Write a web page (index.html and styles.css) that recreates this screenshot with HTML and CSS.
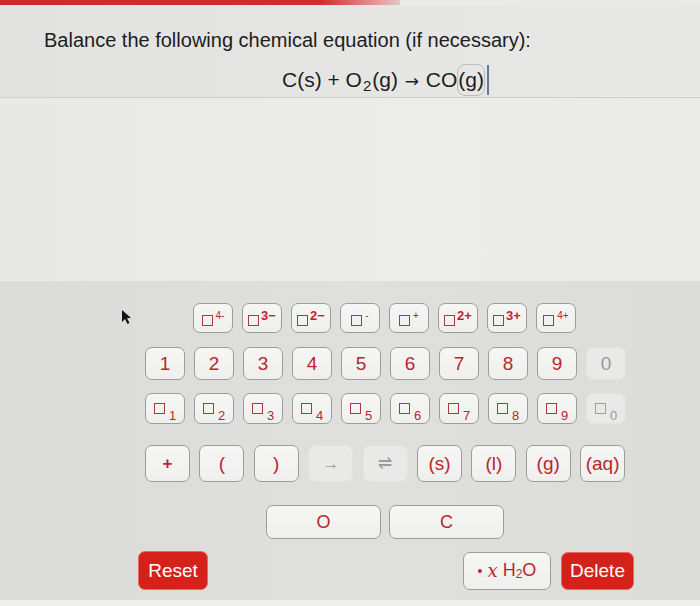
FILE: index.html
```html
<!DOCTYPE html>
<html>
<head>
<meta charset="utf-8">
<link rel="stylesheet" href="styles.css">
</head>
<body>
<div class="page">
  <div class="topbar"></div>
  <header class="question">
    <div class="title">Balance the following chemical equation (if necessary):</div>
    <div class="equation">C(s) + O<sub>2</sub>(g) <span class="arr">→</span> CO<span class="sel">(g)</span><span class="caret"></span></div>
  </header>
  <div class="blank"></div>
  <section class="keyboard">
    <svg class="pointer" width="12" height="16" viewBox="0 0 12 16"><path d="M1 1 L1 13 L4 10 L6.5 15 L8.5 14 L6 9 L10 9 Z" fill="#111"/></svg>
    <div class="row charges">
      <button class="key"><span class="box"></span><sup class="sm">4-</sup></button>
      <button class="key"><span class="box"></span><sup class="lg">3<span class="mn">−</span></sup></button>
      <button class="key"><span class="box"></span><sup class="lg">2<span class="mn">−</span></sup></button>
      <button class="key"><span class="box"></span><sup class="sm">-</sup></button>
      <button class="key"><span class="box"></span><sup class="sm">+</sup></button>
      <button class="key"><span class="box"></span><sup class="lg">2+</sup></button>
      <button class="key"><span class="box"></span><sup class="lg">3+</sup></button>
      <button class="key"><span class="box"></span><sup class="sm">4+</sup></button>
    </div>
    <div class="row digits">
      <button class="key">1</button>
      <button class="key">2</button>
      <button class="key">3</button>
      <button class="key">4</button>
      <button class="key">5</button>
      <button class="key">6</button>
      <button class="key">7</button>
      <button class="key">8</button>
      <button class="key">9</button>
      <button class="key off">0</button>
    </div>
    <div class="row subs">
      <button class="key"><span class="box"></span><sub>1</sub></button>
      <button class="key"><span class="box"></span><sub>2</sub></button>
      <button class="key"><span class="box"></span><sub>3</sub></button>
      <button class="key"><span class="box"></span><sub>4</sub></button>
      <button class="key"><span class="box"></span><sub>5</sub></button>
      <button class="key"><span class="box"></span><sub>6</sub></button>
      <button class="key"><span class="box"></span><sub>7</sub></button>
      <button class="key"><span class="box"></span><sub>8</sub></button>
      <button class="key"><span class="box"></span><sub>9</sub></button>
      <button class="key off"><span class="box"></span><sub>0</sub></button>
    </div>
    <div class="row symbols">
      <button class="key plus">+</button>
      <button class="key">(</button>
      <button class="key">)</button>
      <button class="key off">→</button>
      <button class="key off">⇌</button>
      <button class="key">(s)</button>
      <button class="key">(l)</button>
      <button class="key">(g)</button>
      <button class="key">(aq)</button>
    </div>
    <div class="row elements">
      <button class="key">O</button>
      <button class="key">C</button>
    </div>
    <div class="row actions">
      <button class="red reset">Reset</button>
      <div class="spacer"></div>
      <button class="key hydrate"><span class="dot">•</span> <span class="x">x</span> H<sub>2</sub>O</button>
      <button class="red delete">Delete</button>
    </div>
  </section>
  <div class="bottom"></div>
</div>
</body>
</html>
```

FILE: styles.css
```css
* { box-sizing: border-box; }
html, body { margin: 0; padding: 0; }
body {
  width: 700px;
  height: 606px;
  overflow: hidden;
  font-family: "Liberation Sans", Arial, sans-serif;
  background: #e9e9e7;
}
.page { width: 700px; height: 606px; display: flex; flex-direction: column; }
.topbar {
  height: 5px;
  width: 400px;
  background: linear-gradient(90deg, #d3262a 0%, #d52b2c 80%, rgba(220,60,60,0.2) 100%);
  flex: none;
}
.question {
  height: 93px;
  flex: none;
  background: linear-gradient(90deg, #e2e2e0 0%, #e6e6e4 60%, #e8e8e6 100%);
  border-bottom: 1px solid #cfcfcd;
  padding-top: 24px;
}
.title {
  padding-left: 44px;
  font-size: 20px;
  line-height: 23px;
  color: #1d1d1d;
}
.equation {
  margin-top: 12px;
  padding-left: 282px;
  font-size: 21px;
  line-height: 26px;
  color: #1e1e1e;
  display: flex;
  align-items: center;
  white-space: pre;
}
.equation sub { font-size: 15px; line-height: 1; position: relative; top: 5px; margin: 0 1px; }
.equation .arr { font-family: "DejaVu Sans", sans-serif; font-size: 17px; margin: 0 1px; position: relative; top: 1px; }
.sel {
  border: 1px solid #bdbdbb;
  border-radius: 8px;
  padding: 2px 0;
  line-height: 26px;
}
.caret {
  display: inline-block;
  width: 2px;
  height: 30px;
  background: #6a7892;
  margin-left: 2px;
}
.blank {
  height: 183px;
  flex: none;
  background: linear-gradient(90deg, #e8e8e6 0%, #ececea 60%, #eaeae8 100%);
}
.keyboard {
  flex: 1;
  position: relative;
  background: linear-gradient(90deg, #dbdbd9 0%, #dfdfdd 50%, #dcdcd9 100%);
  padding-top: 22px;
  display: flex;
  flex-direction: column;
}
.pointer { position: absolute; left: 121px; top: 28px; }
.row { display: flex; flex: none; }
.key {
  font-family: "Liberation Sans", Arial, sans-serif;
  background: linear-gradient(180deg, #f6f6f4 0%, #efefed 100%);
  border: 1px solid #9c9c9a;
  border-radius: 7px;
  color: #bb2530;
  padding: 0;
  margin: 0;
  display: flex;
  align-items: center;
  justify-content: center;
  cursor: pointer;
}
.key.off {
  background: #e9e9e7;
  border-color: #e2e2e0;
  color: #9a9a9a;
}
.charges { padding-left: 193px; gap: 9px; }
.charges .key { width: 40px; height: 30px; }
.box {
  display: inline-block;
  width: 11px;
  height: 11px;
  border: 1.3px solid #a9383f;
  margin-top: 5px;
}
.key.off .box { border-color: #a0a0a0; }
.charges sup {
  vertical-align: top;
  line-height: 1;
  margin-left: 2px;
  margin-top: -6px;
}
.charges sup.sm { font-size: 10px; margin-top: -4px; margin-left: 3px; }
.charges sup.lg { font-size: 13px; font-weight: bold; }
.charges .mn { font-weight: bold; }

.digits { margin-top: 14px; padding-left: 145px; gap: 9px; }
.digits .key { width: 40px; height: 33px; font-size: 19px; }

.subs { margin-top: 13px; padding-left: 145px; gap: 9px; }
.subs .key { width: 40px; height: 31px; }
.subs sub {
  font-size: 13px;
  line-height: 1;
  margin-left: 4px;
  margin-top: 13px;
}
.subs .box { margin-top: 0; }

.symbols { margin-top: 21px; padding-left: 145px; gap: 9.4px; }
.symbols .key { width: 45px; height: 37px; font-size: 19px; }
.symbols .key.plus { font-weight: bold; font-size: 17px; }
.symbols .key.off { font-size: 17px; }

.elements { margin-top: 23px; padding-left: 266px; gap: 8px; }
.elements .key { width: 115px; height: 34px; font-size: 18px; }

.actions { margin-top: 12px; padding-left: 138px; padding-right: 66px; align-items: center; }
.spacer { flex: 1; }
.red {
  font-family: "Liberation Sans", Arial, sans-serif;
  background: #d4211a;
  color: #fff;
  border: 1px solid #e86a64;
  border-radius: 7px;
  font-size: 19px;
  height: 39px;
  padding: 0;
  display: flex;
  align-items: center;
  justify-content: center;
}
.reset { width: 70px; }
.delete { width: 73px; margin-left: 10px; height: 38px; }
.hydrate { width: 88px; height: 38px; font-size: 18px; gap: 0; }
.hydrate .dot { font-size: 14px; margin-right: 5px; }
.hydrate .x { font-family: "DejaVu Serif", "Liberation Serif", serif; font-style: italic; font-size: 18px; margin-right: 5px; }
.hydrate sub { font-size: 12px; line-height: 1; align-self: flex-end; margin-bottom: 9px; }

.bottom {
  height: 6px;
  flex: none;
  background: #efefed;
}
```
